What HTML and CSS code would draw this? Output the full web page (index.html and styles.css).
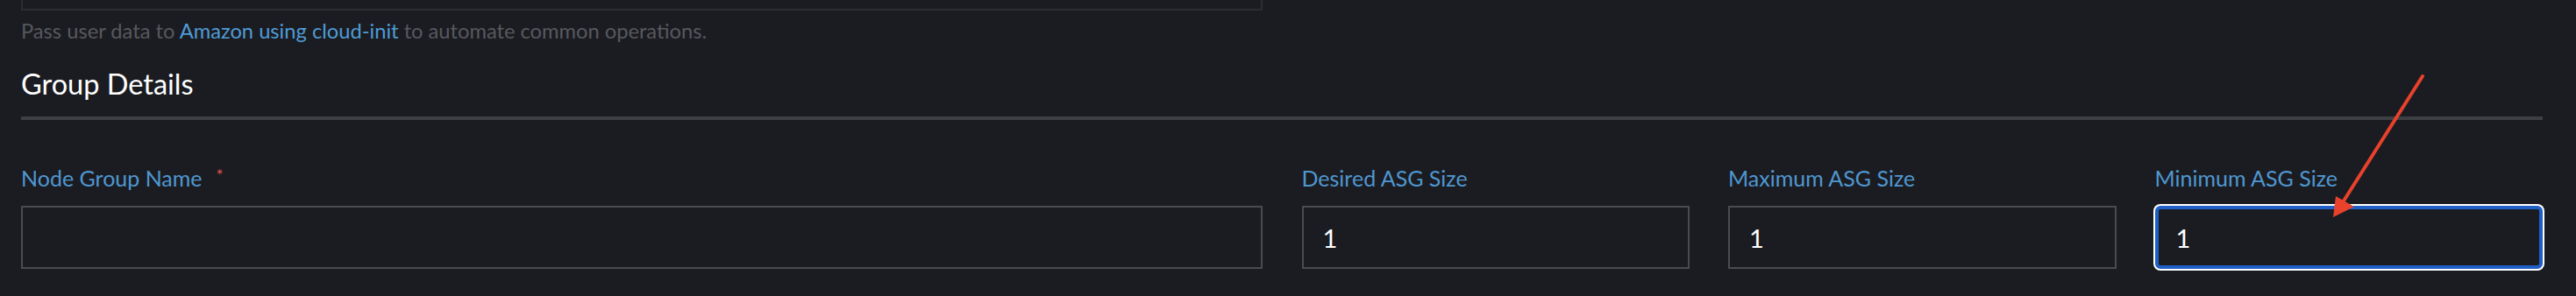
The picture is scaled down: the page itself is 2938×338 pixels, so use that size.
FILE: index.html
```html
<!DOCTYPE html>
<html lang="en">
<head>
<meta charset="utf-8">
<title>Group Details</title>
<link rel="stylesheet" href="styles.css">
</head>
<body>
  <main class="page">
    <div class="userdata-row">
      <div class="textarea-tail"></div>
    </div>
    <p class="help">Pass user data to <a class="help-link" href="#">Amazon using cloud-init</a> to automate common operations.</p>
    <h3 class="section-title">Group Details</h3>
    <div class="divider"></div>
    <div class="form-row">
      <div class="field">
        <label class="field-label">Node Group Name<span class="req">*</span></label>
        <input class="field-input" type="text" value="">
      </div>
      <div class="sizes">
        <div class="field">
          <label class="field-label">Desired ASG Size</label>
          <input class="field-input" type="text" value="1">
        </div>
        <div class="field">
          <label class="field-label">Maximum ASG Size</label>
          <input class="field-input" type="text" value="1">
        </div>
        <div class="field">
          <label class="field-label">Minimum ASG Size</label>
          <input class="field-input is-focused" type="text" value="1">
        </div>
      </div>
    </div>
  </main>
  <svg class="annotation" width="2938" height="338" viewBox="0 0 2938 338" xmlns="http://www.w3.org/2000/svg">
    <line x1="2763" y1="87" x2="2672" y2="231" stroke="#e8412c" stroke-width="4" stroke-linecap="round"/>
    <polygon points="2661,248 2664,224 2685,236" fill="#e8412c"/>
  </svg>
</body>
</html>
```
FILE: styles.css
```css
html, body {
  margin: 0;
  padding: 0;
  background: #1b1c21;
}

body {
  width: 2938px;
  height: 338px;
  overflow: hidden;
  position: relative;
  font-family: Lato, "Open Sans", "Liberation Sans", sans-serif;
}

.page {
  padding: 0 38px 0 24px;
}

.userdata-row {
  display: grid;
  grid-template-columns: 1fr 1fr;
  column-gap: 45px;
}

.textarea-tail {
  height: 10px;
  border: 2px solid #2c2d33;
  border-top: none;
}

.help {
  margin: 9px 0 0 0;
  font-size: 23.7px;
  line-height: 28px;
  color: #57585e;
}

.help-link {
  color: #4f9bd6;
  text-decoration: none;
}

.section-title {
  margin: 27.5px 0 0 0;
  font-size: 32.5px;
  line-height: 38px;
  font-weight: 400;
  color: #ffffff;
}

.divider {
  margin-top: 18.5px;
  height: 4px;
  background: #3e3f45;
}

.form-row {
  margin-top: 51px;
  display: grid;
  grid-template-columns: 1fr 1fr;
  column-gap: 45px;
}

.sizes {
  display: grid;
  grid-template-columns: repeat(3, 1fr);
  column-gap: 44px;
}

.field {
  display: flex;
  flex-direction: column;
  min-width: 0;
}

.field-label {
  font-size: 25px;
  line-height: 30px;
  color: #4f97d1;
  margin-bottom: 17px;
}

.req {
  color: #e0534b;
  font-size: 19px;
  margin-left: 16px;
  vertical-align: top;
  position: relative;
  top: -3px;
}

.field-input {
  box-sizing: border-box;
  width: 100%;
  height: 72px;
  margin: 0;
  padding: 0 22px;
  background: #1b1c21;
  border: 2px solid #4a4b51;
  border-radius: 0;
  color: #ffffff;
  font-family: Lato, "Open Sans", "Liberation Sans", sans-serif;
  font-size: 29px;
  outline: none;
}

.field-input.is-focused {
  border: 4px solid #1f5fc6;
  border-radius: 6px;
  padding: 0 20px;
  box-shadow: 0 0 0 2px #ffffff;
}

.annotation {
  position: absolute;
  left: 0;
  top: 0;
  pointer-events: none;
}
```
